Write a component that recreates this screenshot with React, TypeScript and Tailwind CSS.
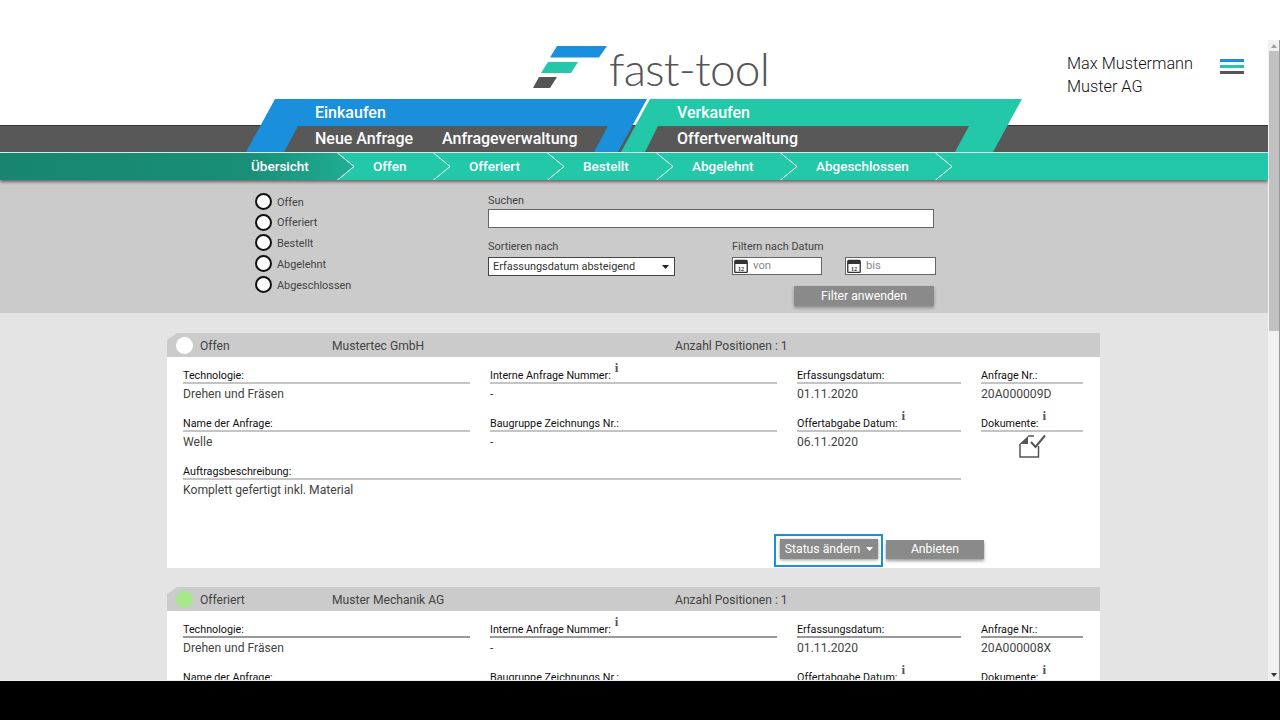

import React from "react";

const stages = [
  { t: "Übersicht", w: "w-[86px]" },
  { t: "Offen", w: "w-[60px]" },
  { t: "Offeriert", w: "w-[78px]" },
  { t: "Bestellt", w: "w-[73px]" },
  { t: "Abgelehnt", w: "w-[88px]" },
  { t: "Abgeschlossen", w: "w-[119px]" },
];

function Info() {
  return <span className="absolute ml-[4px] -mt-[7px] font-['Liberation_Serif',serif] font-bold text-[13px] leading-[12px] text-[#555]">i</span>;
}

function Field({ label, value, info, span, line, children }: { label: string; value?: string; info?: boolean; span?: boolean; line: string; children?: React.ReactNode }) {
  return (
    <div className={`h-[48px] ${span ? "col-span-3" : ""}`}>
      <div className={`h-[16px] pt-[1px] border-b-2 ${line} text-[10.75px] leading-[14px] text-[#111] whitespace-nowrap`}>
        {label}
        {info && <Info />}
      </div>
      {value !== undefined && <div className="mt-[2px] text-[12.15px] leading-[16px] text-[#444]">{value}</div>}
      {children}
    </div>
  );
}

function DocIcon() {
  return (
    <svg width="27" height="24" viewBox="0 0 27 24" className="ml-[38px] mt-[2px]" fill="none">
      <path d="M1 10V23H19.5V12" stroke="#555" strokeWidth="1.5" />
      <path d="M0.5 10L9 2V10Z" fill="#555" />
      <path d="M9 2H15" stroke="#555" strokeWidth="1.5" />
      <path d="M12 8L16.5 13L26 1.5" stroke="#555" strokeWidth="2" />
    </svg>
  );
}

function Card({ status, dot, company, nr, line }: { status: string; dot: string; company: string; nr: string; line: string }) {
  return (
    <div className="w-[933px] ml-[167px] mb-[19px]">
      <div className="h-[24px] bg-[#cbcbcb] flex items-center pl-[9px] pt-[2px] text-[12.1px] text-[#444] [clip-path:polygon(10px_0,100%_0,100%_100%,0_100%,0_7px)]">
        <span className={`w-[17px] h-[17px] rounded-full -mt-[2px] ${dot}`} />
        <span className="ml-[7px] w-[132px]">{status}</span>
        <span className="w-[343px]">{company}</span>
        <span>Anzahl Positionen : 1</span>
      </div>
      <div className="h-[211px] bg-white px-[16px] pt-[11px] flex flex-col">
        <div className="grid grid-cols-[287px_287px_164px_102px] gap-x-[20px]">
          <Field line={line} label="Technologie:" value="Drehen und Fräsen" />
          <Field line={line} label="Interne Anfrage Nummer:" value="-" info />
          <Field line={line} label="Erfassungsdatum:" value="01.11.2020" />
          <Field line={line} label="Anfrage Nr.:" value={nr} />
          <Field line={line} label="Name der Anfrage:" value="Welle" />
          <Field line={line} label="Baugruppe Zeichnungs Nr.:" value="-" />
          <Field line={line} label="Offertabgabe Datum:" value="06.11.2020" info />
          <Field line={line} label="Dokumente:" info>
            <DocIcon />
          </Field>
          <Field line={line} label="Auftragsbeschreibung:" value="Komplett gefertigt inkl. Material" span />
        </div>
        <div className="mt-auto mb-[1px] mr-[100px] flex justify-end items-start text-[12.2px] text-white">
          <div className="w-[109px] h-[33px] border-2 border-[#1a8fdc] pl-[4px] pt-[3px]">
            <div className="w-[98px] h-[20px] bg-[#8a8a8a] shadow-[0_1px_3px_rgba(0,0,0,0.4)] flex items-center justify-center gap-[6px]">
              Status ändern
              <svg width="7" height="4" viewBox="0 0 7 4"><path d="M0 0H7L3.5 4Z" fill="#fff" /></svg>
            </div>
          </div>
          <div className="ml-[3px] mt-[6px] w-[98px] h-[19px] bg-[#8a8a8a] shadow-[0_2px_3px_rgba(0,0,0,0.4)] flex items-center justify-center">Anbieten</div>
        </div>
      </div>
    </div>
  );
}

function CalIcon() {
  return (
    <svg width="14" height="14" viewBox="0 0 14 14" className="shrink-0">
      <rect x="0.75" y="1.5" width="12.5" height="12" rx="1" fill="#fff" stroke="#333" strokeWidth="1.3" />
      <rect x="1" y="1.5" width="12" height="3.5" fill="#333" />
      <text x="7" y="11.8" textAnchor="middle" fontSize="6" fontWeight="700" fontFamily="Liberation Serif, serif" fill="#333">12</text>
    </svg>
  );
}

function DateBox({ w, text }: { w: string; text: string }) {
  return (
    <div className={`${w} h-[18px] bg-white border border-[#666] flex items-center pl-[1px] gap-[5px] text-[11.3px] text-[#888]`}>
      <CalIcon />
      <span className="pt-[1px]">{text}</span>
    </div>
  );
}

export default function App() {
  return (
    <div className="w-[1280px] h-[720px] bg-black overflow-hidden font-['Roboto',sans-serif]">
      <div className="h-[681px] flex bg-white border-b border-[#eee] overflow-hidden">
        <div className="w-[1268px] shrink-0 bg-[#e4e4e4] overflow-hidden">
          {/* Header */}
          <div className="h-[99px] bg-white flex pl-[533px] pt-[46px]">
            <svg width="75" height="43" viewBox="0 0 75 43" className="shrink-0">
              <polygon points="24,0 74,0 66,11.5 17,11.5" fill="#1a8fdc" />
              <polygon points="15,16 45,16 38,27 8,27" fill="#22c8a8" />
              <polygon points="6,31 24,31 17,42 0,42" fill="#555" />
            </svg>
            <div className="ml-[1px] -mt-[2px] h-[50px] text-[46px] leading-[50px] font-['Lato',sans-serif] font-light text-[#555] tracking-[-0.8px] whitespace-nowrap">fast-tool</div>
            <div className="ml-auto -mt-[47px] pt-[53px] flex">
              <div className="text-[16.25px] leading-[23px] font-light text-[#111] whitespace-nowrap">
                <div>Max Mustermann</div>
                <div>Muster AG</div>
              </div>
              <div className="ml-[27px] mr-[24px] mt-[7px] w-[24px]">
                <div className="h-[3px] bg-[#1a8fdc]" />
                <div className="h-[3px] mt-[3px] bg-[#22c8a8]" />
                <div className="h-[3px] mt-[3px] bg-[#555]" />
              </div>
            </div>
          </div>

          {/* Tabs */}
          <div className="relative h-[54px] bg-white">
            <div className="absolute left-0 right-0 top-[26px] h-[27px] bg-[#585858] border-t border-[#333]" />
            <svg width="1268" height="54" viewBox="0 0 1268 54" className="absolute left-0 top-0">
              <polygon points="275,0 647,0 618,53 246,53" fill="#1a8fdc" />
              <polygon points="298,27 608,27 594,53 284,53" fill="#585858" />
              <polygon points="650,0 1022,0 993,53 621,53" fill="#22c8a8" />
              <polygon points="658,27 969,27 955,53 645,53" fill="#585858" />
              <path d="M648.5 0L635 25" stroke="#fff" strokeWidth="1.5" />
              <rect x="0" y="53" width="1268" height="1" fill="#dff3ee" />
            </svg>
            <div className="relative h-[27px] pt-[1px] flex items-center pl-[315px] text-[16px] font-medium text-white">
              <span className="w-[362px]">Einkaufen</span>
              <span>Verkaufen</span>
            </div>
            <div className="relative h-[26px] flex items-center pl-[315px] text-[16px] font-medium text-white">
              <span className="w-[127px]">Neue Anfrage</span>
              <span className="w-[235px]">Anfrageverwaltung</span>
              <span>Offertverwaltung</span>
            </div>
          </div>

          {/* Stage bar */}
          <div className="relative z-10 h-[27px] bg-[#22c8a8] shadow-[0_2px_3px_rgba(0,0,0,0.5)]">
            <svg width="354" height="27" viewBox="0 0 354 27" className="absolute left-0 top-0">
              <defs>
                <linearGradient id="g" x1="0" x2="1" y1="0" y2="0">
                  <stop offset="0" stopColor="#17856f" />
                  <stop offset="0.7" stopColor="#198f78" />
                  <stop offset="1" stopColor="#1fae93" />
                </linearGradient>
              </defs>
              <polygon points="0,0 337,0 354,13.5 337,27 0,27" fill="url(#g)" />
            </svg>
            <div className="relative flex h-[27px] pl-[251px] items-center text-[13.5px] font-medium text-white">
              {stages.map((s) => (
                <React.Fragment key={s.t}>
                  <span className={`${s.w} shrink-0 -mt-[1px]`}>{s.t}</span>
                  <svg width="18" height="27" viewBox="0 0 18 27" className="shrink-0 mr-[18px]" fill="none">
                    <path d="M0.5 0L17 13.5L0.5 27" stroke="#fff" strokeWidth="1" />
                  </svg>
                </React.Fragment>
              ))}
            </div>
          </div>

          {/* Filter */}
          <div className="h-[133px] bg-[#cbcbcb] flex text-[10.9px] text-[#444] mb-[20px]">
            <div className="w-[488px] pl-[255px] pt-[11px]">
              {["Offen", "Offeriert", "Bestellt", "Abgelehnt", "Abgeschlossen"].map((l) => (
                <div key={l} className="h-[20.75px] flex items-center">
                  <span className="w-[17px] h-[17px] rounded-full bg-white border-2 border-[#111] shrink-0" />
                  <span className="ml-[5px] mt-[3px]">{l}</span>
                </div>
              ))}
            </div>
            <div className="w-[448px] pt-[13px]">
              <div className="h-[14px] leading-[16px]">Suchen</div>
              <div className="w-[446px] h-[19px] mt-[2px] bg-white border border-[#666]" />
              <div className="flex mt-[11px]">
                <div className="w-[187px]">
                  <div className="h-[14px] leading-[16px]">Sortieren nach</div>
                  <div className="h-[19px] mt-[4px] bg-white border border-[#444] flex items-center justify-between pl-[4px] pr-[5px] text-[#333]">
                    <span className="pt-[1px]">Erfassungsdatum absteigend</span>
                    <svg width="7" height="4" viewBox="0 0 7 4"><path d="M0 0H7L3.5 4Z" fill="#222" /></svg>
                  </div>
                </div>
                <div className="ml-[57px]">
                  <div className="h-[14px] leading-[16px]">Filtern nach Datum</div>
                  <div className="flex mt-[4px] gap-[23px]">
                    <DateBox w="w-[90px]" text="von" />
                    <DateBox w="w-[91px]" text="bis" />
                  </div>
                </div>
              </div>
              <div className="flex justify-end pr-[2px] mt-[10px]">
                <div className="w-[140px] h-[20px] bg-[#8a8a8a] shadow-[0_2px_3px_rgba(0,0,0,0.3)] text-white text-[12.2px] flex items-center justify-center">Filter anwenden</div>
              </div>
            </div>
          </div>

          <Card line="border-[#c4c4c4]" status="Offen" dot="bg-white" company="Mustertec GmbH" nr="20A000009D" />
          <Card line="border-[#999]" status="Offeriert" dot="bg-[#a6e88a]" company="Muster Mechanik AG" nr="20A000008X" />
        </div>

        {/* Scrollbar */}
        <div className="w-[12px] mt-[40px] bg-[#f1f1f1] border-r border-[#999] flex flex-col items-center">
          <div className="h-[11px] flex items-center justify-center">
            <svg width="6" height="4" viewBox="0 0 6 4"><path d="M0 4H6L3 0Z" fill="#a0a0a0" /></svg>
          </div>
          <div className="w-[10px] h-[280px] bg-[#c1c1c1]" />
          <div className="mt-auto h-[11px] flex items-center justify-center">
            <svg width="6" height="4" viewBox="0 0 6 4"><path d="M0 0H6L3 4Z" fill="#333" /></svg>
          </div>
        </div>
      </div>
    </div>
  );
}
